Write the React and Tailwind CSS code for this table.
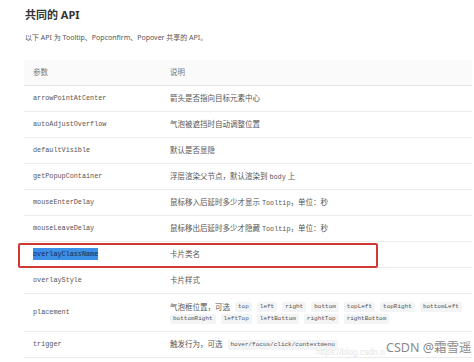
import React from "react";

const mono = { fontFamily: '"Liberation Mono", "DejaVu Sans Mono", monospace' };
const cjk = { fontFamily: '"Noto Sans", "Noto Sans CJK SC", sans-serif' };

function Tag({ children }) {
  return (
    <span className="inline-block bg-[#f2f4f5] rounded-[2px] px-[3px] leading-[10px] text-[6px] text-[#555]" style={mono}>
      {children}
    </span>
  );
}

const rows = [
  ["arrowPointAtCenter", "箭头是否指向目标元素中心"],
  ["autoAdjustOverflow", "气泡被遮挡时自动调整位置"],
  ["defaultVisible", "默认是否显隐"],
  ["getPopupContainer", <>浮层渲染父节点，默认渲染到 <span style={mono} className="text-[6.8px]">body</span> 上</>],
  ["mouseEnterDelay", <>鼠标移入后延时多少才显示 <span style={mono} className="text-[6.8px]">Tooltip</span>，单位：秒</>],
  ["mouseLeaveDelay", <>鼠标移出后延时多少才隐藏 <span style={mono} className="text-[6.8px]">Tooltip</span>，单位：秒</>],
];

function Row({ name, desc, h = "h-[26px]", selected, children }) {
  return (
    <div className={`relative flex items-center ${h} border-b border-[#ebebeb]`}>
      <div className="w-[146px] pl-[9px] text-[6.8px] text-[#555]" style={mono}>
        {selected ? <span className="bg-[#3b8fe6] text-[#1a2a50] py-[2px]">{name}</span> : name}
      </div>
      <div className="flex-1 text-[7.5px] text-[#555]" style={cjk}>{desc}{children}</div>
      {selected && (
        <div className="absolute left-[-6px] top-[1px] w-[360px] h-[25px] border-2 border-[#cf3b34] rounded-[2px]" />
      )}
    </div>
  );
}

export default function App() {
  return (
    <div className="relative w-[474px] h-[362px] bg-white overflow-hidden" style={cjk}>
      <div className="pl-[25px] pt-[7px] h-[28px] text-[11px] font-bold text-[#333]">共同的 API</div>
      <div className="pl-[25px] pt-[5px] h-[32px] text-[7px] text-[#555]">以下 API 为 Tooltip、Popconfirm、Popover 共享的 API。</div>
      <div className="ml-[24px] mr-[2px]">
        <div className="flex items-center h-[26px] bg-[#fafafa] border-b border-[#e6e6e6] text-[7.5px] text-[#777]">
          <div className="w-[146px] pl-[9px]">参数</div>
          <div className="flex-1">说明</div>
        </div>
        {rows.map(([n, d]) => <Row key={n} name={n} desc={d} />)}
        <Row name="overlayClassName" desc="卡片类名" selected />
        <Row name="overlayStyle" desc="卡片样式" />
        <Row name="placement" h="h-[38px]">
          <div className="flex flex-wrap gap-x-[5px] gap-y-[1px] items-center leading-[11px] pr-[4px]">
            <span>气泡框位置，可选</span>
            <Tag>top</Tag><Tag>left</Tag><Tag>right</Tag><Tag>bottom</Tag><Tag>topLeft</Tag><Tag>topRight</Tag><Tag>bottomLeft</Tag>
            <Tag>bottomRight</Tag><Tag>leftTop</Tag><Tag>leftBottom</Tag><Tag>rightTop</Tag><Tag>rightBottom</Tag>
          </div>
        </Row>
        <Row name="trigger">
          <div className="flex items-center gap-[5px]">
            <span>触发行为，可选</span>
            <Tag>hover/focus/click/contextmenu</Tag>
          </div>
        </Row>
      </div>
      <div className="absolute left-[316px] top-[347px] text-[8.5px] leading-[10px] text-[#e6e6e6]" style={{ fontFamily: '"Liberation Sans", sans-serif' }}>https://blog.csdn.n</div>
      <div className="absolute left-[386px] top-[339px] text-[12.5px] text-[#8a8a8a]" style={{ fontFamily: '"Noto Sans", "Noto Sans CJK SC", sans-serif' }}>CSDN @霜雪遥</div>
    </div>
  );
}
